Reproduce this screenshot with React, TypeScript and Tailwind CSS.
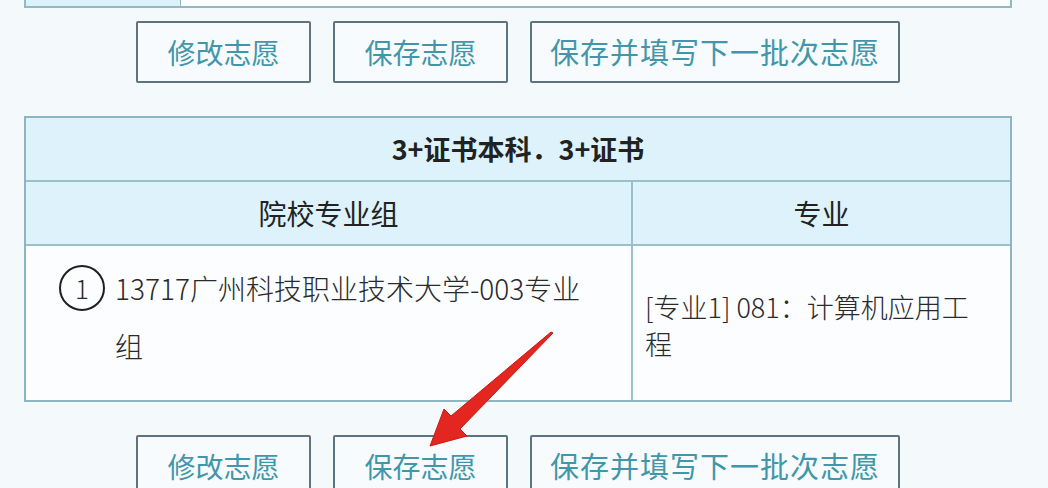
const font = { fontFamily: '"Noto Sans CJK SC", "Noto Sans", sans-serif' };

function ActionButtons() {
  return (
    <div className="flex h-[62px] gap-[22px] pl-[136px]">
      <button className="w-[175px] rounded-[2px] border-2 border-[#5d7480] bg-[#f7fbfd] text-[28px] text-[#4197a9]">
        修改志愿
      </button>
      <button className="w-[175px] rounded-[2px] border-2 border-[#5d7480] bg-[#f7fbfd] text-[28px] text-[#4197a9]">
        保存志愿
      </button>
      <button className="w-[370px] rounded-[2px] border-2 border-[#5d7480] bg-[#f7fbfd] text-[29px] tracking-[1px] text-[#4197a9]">
        保存并填写下一批次志愿
      </button>
    </div>
  );
}

export default function App() {
  return (
    <div
      className="relative h-[488px] w-[1048px] overflow-hidden bg-[#f4f9fc]"
      style={font}
    >
      {/* tail of the previous table */}
      <div className="ml-[24px] flex h-[8px] w-[988px] border-x-2 border-b-2 border-[#90b9c4]">
        <div className="w-[155px] border-r border-[#90b9c4] bg-[#dcf1f9]" />
        <div className="flex-1 bg-[#fbfdfe]" />
      </div>

      <div className="mt-[13px]">
        <ActionButtons />
      </div>

      {/* volunteer table */}
      <div className="ml-[24px] mt-[33px] w-[988px] border-2 border-[#8db6c2] text-[#222]">
        <div className="flex h-[64px] items-center justify-center border-b-2 border-[#9cc0ca] bg-[#ddf2fb] text-[27px] font-bold">
          3+证书本科．3+证书
        </div>
        <div className="flex h-[64px] border-b-2 border-[#9cc0ca] bg-[#ddf2fb] text-[28px]">
          <div className="flex w-[607px] items-center justify-center border-r-2 border-[#9cc0ca]">
            院校专业组
          </div>
          <div className="flex flex-1 items-center justify-center">专业</div>
        </div>
        <div className="flex h-[154px] bg-[#fbfdfe] font-light text-[#2a2a2a]">
          <div className="flex w-[607px] items-start gap-[10px] border-r-2 border-[#9cc0ca] pl-[33px] pt-[13px]">
            <div className="mt-[6px] flex h-[46px] w-[46px] shrink-0 items-center justify-center rounded-full border-2 border-[#1f1f1f] text-[26px] leading-none">
              1
            </div>
            <div className="text-[28px] leading-[58px]">
              13717广州科技职业技术大学-003专业
              <br />组
            </div>
          </div>
          <div className="flex flex-1 items-center pl-[12px] pt-[4px]">
            <div className="text-[27px] leading-[37px]">
              [专业1] 081：计算机应用工
              <br />程
            </div>
          </div>
        </div>
      </div>

      <div className="mt-[33px]">
        <ActionButtons />
      </div>

      {/* red pointer arrow */}
      <svg
        className="pointer-events-none absolute inset-0"
        width="1048"
        height="488"
        viewBox="0 0 1048 488"
      >
        <polygon
          points="553,333 460,429 467,436 430,446 444,409 451,416 551,332"
          fill="#e3261f"
          stroke="#c81a14"
          strokeWidth="1"
          strokeLinejoin="round"
        />
      </svg>
    </div>
  );
}
